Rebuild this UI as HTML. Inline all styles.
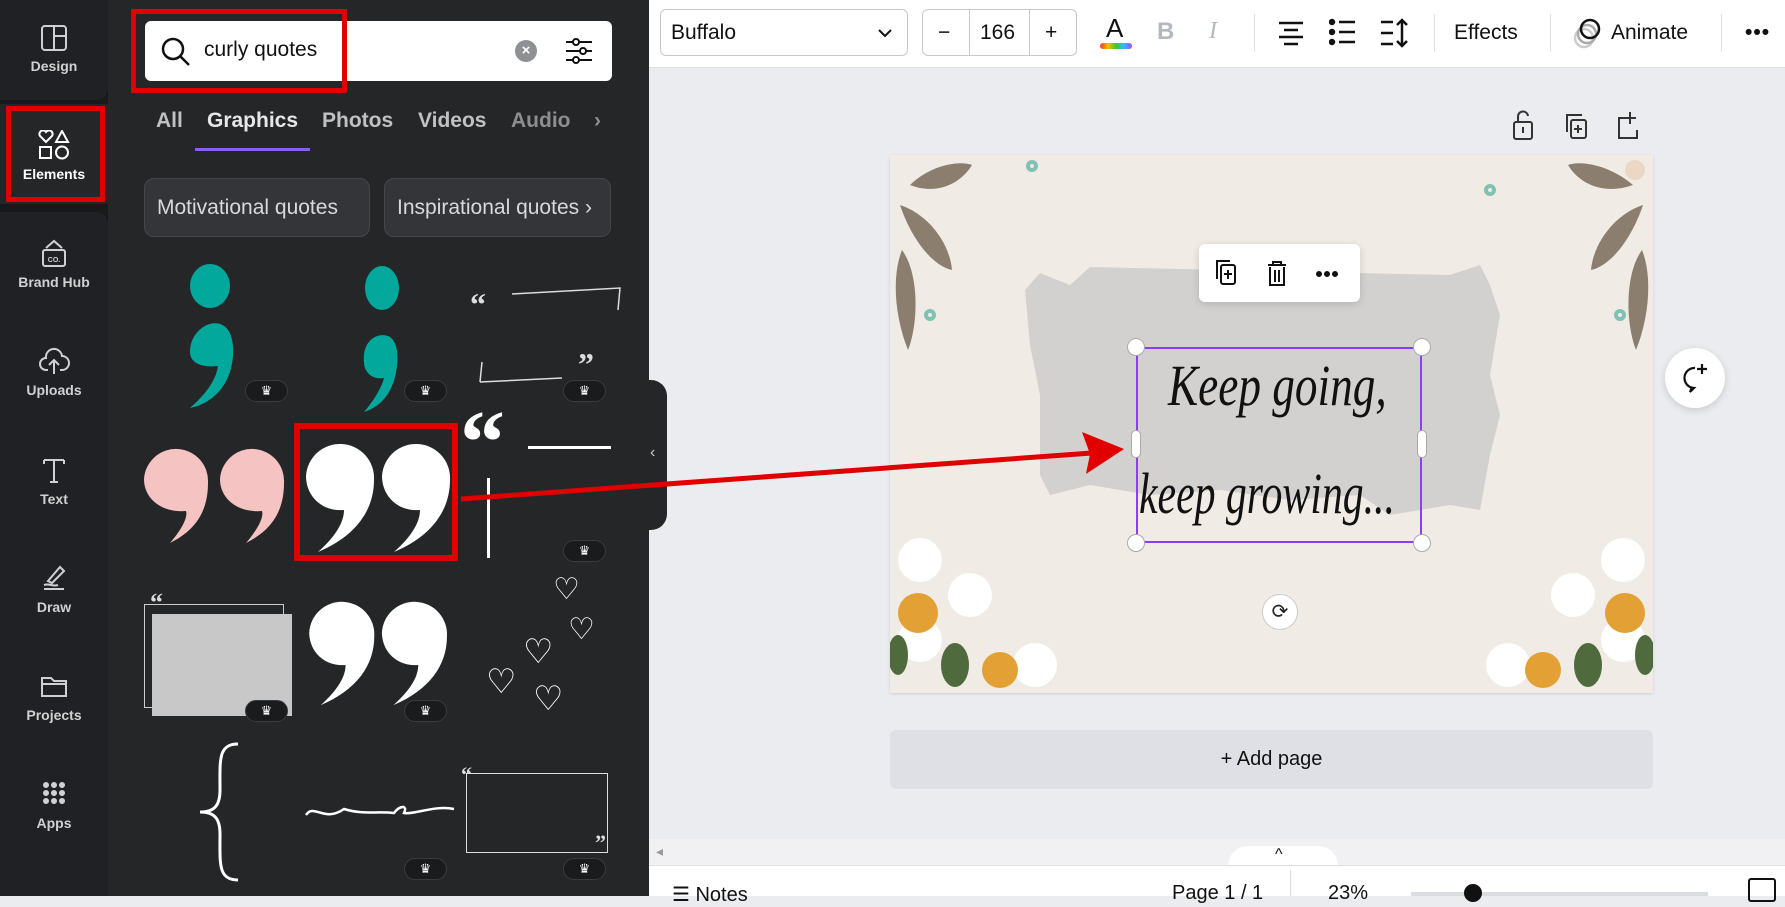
<!DOCTYPE html>
<html><head><meta charset="utf-8"><style>
*{box-sizing:border-box;margin:0;padding:0}
body{width:1785px;height:896px;overflow:hidden;background:#ebecf0;font-family:"Liberation Sans",sans-serif;position:relative}
.a{position:absolute}
.side{left:0;top:0;width:108px;height:896px;background:#18191b}
.si{position:absolute;left:0;width:108px;text-align:center;color:#d0d1d3;font-size:14px;font-weight:bold}
.si svg{display:block;margin:0 auto 6px}
.panel{left:108px;top:0;width:541px;height:896px;background:#252627}
.tab{position:absolute;top:109px;font-size:21px;font-weight:bold;color:#bfc1c4}
.chip{position:absolute;top:178px;height:59px;border-radius:10px;background:#343538;border:1px solid #45464a;color:#d8d9db;font-size:21px;line-height:57px;padding-left:12px;overflow:hidden;white-space:nowrap}
.crown{position:absolute;width:43px;height:22px;border-radius:11px;background:#1a1b1d;border:1px solid #3a3b3e;color:#fff;font-size:13px;text-align:center;line-height:20px}
.tb{left:649px;top:0;width:1136px;height:68px;background:#fff;border-bottom:1px solid #dcdde0}
.ti{position:absolute;top:21px;font-size:21px;color:#111}
.div{position:absolute;top:14px;width:1px;height:38px;background:#e0e1e3}
</style></head><body>

<div class="a side">
 <div class="a" style="left:0;top:0;width:108px;height:100px;background:#202124;border-radius:0 0 12px 0"></div>
 <div class="si" style="top:24px"><svg width="28" height="28" viewBox="0 0 28 28" fill="none" stroke="#cfd0d2" stroke-width="2"><rect x="2" y="2" width="24" height="24" rx="3"/><path d="M14 2v24M14 12h12"/></svg>Design</div>
 <div class="a" style="left:0;top:104px;width:108px;height:100px;background:#252627"></div>
 <div class="si" style="top:130px;color:#fff"><svg width="32" height="30" viewBox="0 0 32 30" fill="none" stroke="#fff" stroke-width="2"><path d="M8 12 L2 6 A3.5 3.5 0 0 1 8 2 A3.5 3.5 0 0 1 14 6Z"/><path d="M24 1 L30 12 H18Z"/><rect x="2" y="17" width="11" height="11"/><circle cx="24" cy="22.5" r="6"/></svg>Elements</div>
 <div class="a" style="left:6px;top:106px;width:99px;height:96px;border:5px solid #e00000"></div>
 <div class="a" style="left:0;top:212px;width:108px;height:684px;background:#202124;border-radius:0 12px 0 0"></div>
 <div class="si" style="top:238px"><svg width="28" height="30" viewBox="0 0 28 30" fill="none" stroke="#cfd0d2" stroke-width="2"><rect x="3" y="12" width="22" height="16" rx="2"/><path d="M6 10 L14 3 L22 10"/><text x="14" y="24" font-size="7" fill="#cfd0d2" stroke="none" text-anchor="middle">CO.</text></svg>Brand Hub</div>
 <div class="si" style="top:346px"><svg width="32" height="30" viewBox="0 0 32 30" fill="none" stroke="#cfd0d2" stroke-width="2"><path d="M10 24 H8 A6 6 0 0 1 8 12 A8 8 0 0 1 24 10 A6 6 0 0 1 24 24 H22"/><path d="M16 28 V15 M11 19 L16 14 L21 19"/></svg>Uploads</div>
 <div class="si" style="top:455px"><svg width="28" height="30" viewBox="0 0 28 30" fill="none" stroke="#cfd0d2" stroke-width="2"><path d="M4 5 H24 M14 5 V27 M4 5 V9 M24 5 V9 M10 27 H18"/></svg>Text</div>
 <div class="si" style="top:563px"><svg width="28" height="30" viewBox="0 0 28 30" fill="none" stroke="#cfd0d2" stroke-width="2"><path d="M8 18 L20 4 L24 8 L12 20Z M4 26 H24 M4 22 C10 20 12 24 18 22"/></svg>Draw</div>
 <div class="si" style="top:671px"><svg width="30" height="30" viewBox="0 0 30 30" fill="none" stroke="#cfd0d2" stroke-width="2"><path d="M3 7 H12 L15 10 H27 V25 H3Z M3 13 H27"/></svg>Projects</div>
 <div class="si" style="top:779px"><svg width="28" height="30" viewBox="0 0 28 30" fill="#cfd0d2"><circle cx="6" cy="6" r="3"/><circle cx="14" cy="6" r="3"/><circle cx="22" cy="6" r="3"/><circle cx="6" cy="14" r="3"/><circle cx="14" cy="14" r="3"/><circle cx="22" cy="14" r="3"/><circle cx="6" cy="22" r="3"/><circle cx="14" cy="22" r="3"/><circle cx="22" cy="22" r="3"/></svg>Apps</div>
</div>

<div class="a panel">
 <div class="a" style="left:37px;top:21px;width:467px;height:60px;background:#fff;border-radius:6px"></div>
 <svg class="a" style="left:52px;top:36px" width="32" height="32" viewBox="0 0 32 32" fill="none" stroke="#111" stroke-width="2.5"><circle cx="13" cy="13" r="10"/><path d="M20 20 L29 29"/></svg>
 <div class="a" style="left:96px;top:38px;font-size:21px;color:#111">curly quotes</div>
 <div class="a" style="left:407px;top:40px;width:22px;height:22px;border-radius:50%;background:#8e9093;color:#fff;font-size:15px;text-align:center;line-height:22px;font-weight:bold">×</div>
 <svg class="a" style="left:456px;top:37px" width="30" height="28" viewBox="0 0 30 28" fill="none" stroke="#111" stroke-width="2"><path d="M2 5H28M2 14H28M2 23H28"/><circle cx="12" cy="5" r="3" fill="#fff"/><circle cx="19" cy="14" r="3" fill="#fff"/><circle cx="12" cy="23" r="3" fill="#fff"/></svg>
 <div class="a" style="left:23px;top:9px;width:216px;height:84px;border:5px solid #e00000"></div>
 <div class="tab" style="left:48px">All</div>
 <div class="tab" style="left:99px;color:#e6e7e9">Graphics</div>
 <div class="tab" style="left:214px">Photos</div>
 <div class="tab" style="left:310px">Videos</div>
 <div class="tab" style="left:403px;color:#8c8e91">Audio</div>
 <div class="tab" style="left:486px;color:#8c8e91">›</div>
 <div class="a" style="left:87px;top:148px;width:115px;height:3px;background:#8b5cf6"></div>
 <div class="chip" style="left:36px;width:226px">Motivational quotes</div>
 <div class="chip" style="left:276px;width:227px">Inspirational quotes ›</div>

 <svg class="a" style="left:80px;top:262px" width="60" height="150" viewBox="0 0 60 150"><ellipse cx="22" cy="24" rx="20" ry="22" fill="#02a89c"/><path d="M2 90 C2 70 20 58 32 62 C46 66 48 90 42 110 C36 128 22 142 2 146 C18 132 28 118 30 104 C12 106 2 100 2 90Z" fill="#02a89c"/></svg>
 <div class="crown" style="left:137px;top:380px">♛</div>
 <svg class="a" style="left:246px;top:262px" width="60" height="150" viewBox="0 0 60 150"><ellipse cx="28" cy="26" rx="17" ry="22" fill="#02a89c"/><path d="M10 100 C8 80 22 70 34 74 C48 80 44 110 38 124 C32 138 22 146 10 150 C22 136 28 124 30 116 C18 118 10 110 10 100Z" fill="#02a89c"/></svg>
 <div class="crown" style="left:296px;top:380px">♛</div>
 <div class="a" style="left:362px;top:286px;color:#ddd;font-size:32px;font-weight:bold;font-family:'Liberation Serif',serif">“</div>
 <svg class="a" style="left:354px;top:280px" width="260" height="110" viewBox="0 0 260 110" fill="none" stroke="#ddd" stroke-width="1.5"><path d="M50 14 L158 8 L156 30 M18 102 L20 82 M18 102 L100 98"/></svg>
 <div class="a" style="left:470px;top:346px;color:#ddd;font-size:32px;font-weight:bold;font-family:'Liberation Serif',serif">”</div>
 <div class="crown" style="left:455px;top:380px">♛</div>

 <svg class="a" style="left:34px;top:445px" width="152" height="100" viewBox="0 0 152 100" fill="#f6c3c3"><path d="M2 34 A32 32 0 1 1 66 38 C66 68 52 86 28 98 C40 84 46 72 44 66 C20 68 2 54 2 34Z"/><path d="M78 34 A32 32 0 1 1 142 38 C142 68 128 86 104 98 C116 84 122 72 120 66 C96 68 78 54 78 34Z"/></svg>
 <svg class="a" style="left:196px;top:440px" width="152" height="115" viewBox="0 0 152 115" fill="#fff"><path d="M2 36 A34 34 0 1 1 70 40 C70 70 52 96 14 112 C32 96 40 82 40 70 C18 72 2 56 2 36Z"/><path d="M78 36 A34 34 0 1 1 146 40 C146 70 128 96 90 112 C108 96 116 82 116 70 C94 72 78 56 78 36Z"/></svg>
 <div class="a" style="left:186px;top:423px;width:164px;height:138px;border:6px solid #e00000"></div>
 <div class="a" style="left:352px;top:398px;color:#fff;font-size:90px;font-weight:bold;font-family:'Liberation Serif',serif;line-height:1">“</div>
 <div class="a" style="left:420px;top:446px;width:83px;height:3px;background:#fff"></div>
 <div class="a" style="left:379px;top:478px;width:3px;height:80px;background:#fff"></div>
 <div class="crown" style="left:455px;top:540px">♛</div>

 <div class="a" style="left:36px;top:604px;width:140px;height:104px;border:1px solid #ccc"></div>
 <div class="a" style="left:44px;top:614px;width:140px;height:102px;background:#c8c8c8"></div>
 <div class="a" style="left:42px;top:588px;color:#ddd;font-size:26px;font-weight:bold;font-family:'Liberation Serif',serif">“</div>
 <div class="crown" style="left:137px;top:700px">♛</div>
 <svg class="a" style="left:196px;top:598px" width="152" height="110" viewBox="0 0 152 115" fill="#fff"><path d="M2 36 A34 34 0 1 1 70 40 C70 70 52 96 14 112 C32 96 40 82 40 70 C18 72 2 56 2 36Z"/><path d="M78 36 A34 34 0 1 1 146 40 C146 70 128 96 90 112 C108 96 116 82 116 70 C94 72 78 56 78 36Z"/></svg>
 <div class="crown" style="left:296px;top:700px">♛</div>
 <div class="a" style="left:445px;top:575px;color:#fff;font-size:30px;line-height:1">♡</div>
 <div class="a" style="left:460px;top:615px;color:#fff;font-size:30px;line-height:1">♡</div>
 <div class="a" style="left:415px;top:635px;color:#fff;font-size:34px;line-height:1">♡</div>
 <div class="a" style="left:378px;top:665px;color:#fff;font-size:34px;line-height:1">♡</div>
 <div class="a" style="left:425px;top:682px;color:#fff;font-size:34px;line-height:1">♡</div>

 <svg class="a" style="left:80px;top:740px" width="60" height="145" viewBox="0 0 60 145" fill="none" stroke="#fff" stroke-width="3"><path d="M50 4 C30 4 32 20 32 50 C32 66 26 72 12 72 C26 72 32 78 32 94 C32 124 30 140 50 140"/></svg>
 <svg class="a" style="left:196px;top:795px" width="152" height="30" viewBox="0 0 152 30" fill="none" stroke="#fff" stroke-width="2.5"><path d="M2 20 C10 8 20 28 40 14 C60 20 70 16 90 18 C96 10 104 10 100 18 C110 20 130 10 150 14"/></svg>
 <div class="crown" style="left:296px;top:858px">♛</div>
 <div class="a" style="left:358px;top:773px;width:142px;height:80px;border:1px solid #ddd"></div>
 <div class="a" style="left:353px;top:762px;color:#ddd;font-size:22px;font-weight:bold;font-family:'Liberation Serif',serif">“</div>
 <div class="a" style="left:487px;top:830px;color:#ddd;font-size:22px;font-weight:bold;font-family:'Liberation Serif',serif">”</div>
 <div class="crown" style="left:455px;top:858px">♛</div>
</div>
<div class="a" style="left:645px;top:380px;width:22px;height:150px;background:#252627;border-radius:0 16px 16px 0"></div>
<div class="a" style="left:650px;top:444px;color:#ccc;font-size:16px">‹</div>

<div class="a tb">
 <div class="a" style="left:11px;top:9px;width:248px;height:47px;border:1px solid #c8c9cc;border-radius:6px"></div>
 <div class="ti" style="left:22px">Buffalo</div>
 <svg class="a" style="left:228px;top:27px" width="16" height="12" viewBox="0 0 16 12" fill="none" stroke="#111" stroke-width="2"><path d="M2 3 L8 9 L14 3"/></svg>
 <div class="a" style="left:273px;top:9px;width:155px;height:47px;border:1px solid #c8c9cc;border-radius:6px"></div>
 <div class="a" style="left:320px;top:10px;width:1px;height:45px;background:#c8c9cc"></div>
 <div class="a" style="left:380px;top:10px;width:1px;height:45px;background:#c8c9cc"></div>
 <div class="ti" style="left:289px">−</div>
 <div class="ti" style="left:331px">166</div>
 <div class="ti" style="left:396px">+</div>
 <div class="ti" style="left:457px;top:13px;font-size:26px">A</div>
 <div class="a" style="left:451px;top:43px;width:32px;height:6px;border-radius:3px;background:linear-gradient(90deg,#f33,#fb0,#3c3,#3bf,#a4f)"></div>
 <div class="ti" style="left:508px;top:18px;font-weight:bold;font-size:24px;color:#b5b8bd">B</div>
 <div class="ti" style="left:560px;top:18px;font-style:italic;font-size:24px;color:#b5b8bd;font-family:'Liberation Serif',serif">I</div>
 <div class="div" style="left:605px"></div>
 <svg class="a" style="left:628px;top:20px" width="28" height="26" viewBox="0 0 28 26" stroke="#111" stroke-width="2.5"><path d="M2 3H26M7 10H21M2 17H26M7 24H21"/></svg>
 <svg class="a" style="left:680px;top:18px" width="28" height="28" viewBox="0 0 28 28" fill="#111" stroke="#111" stroke-width="2.5"><circle cx="3" cy="4" r="2"/><circle cx="3" cy="14" r="2"/><circle cx="3" cy="24" r="2"/><path d="M10 4H26M10 14H26M10 24H26"/></svg>
 <svg class="a" style="left:730px;top:17px" width="30" height="32" viewBox="0 0 30 32" fill="none" stroke="#111" stroke-width="2.5"><path d="M2 5H14M2 16H14M2 27H14M23 3V29M18 8L23 3L28 8M18 24L23 29L28 24"/></svg>
 <div class="div" style="left:785px"></div>
 <div class="ti" style="left:805px">Effects</div>
 <div class="div" style="left:901px"></div>
 <svg class="a" style="left:923px;top:16px" width="32" height="34" viewBox="0 0 32 34" fill="none" stroke-width="2.5"><circle cx="12" cy="22" r="9" stroke="#ccc"/><circle cx="15" cy="18" r="9" stroke="#aaa"/><circle cx="18" cy="13" r="9" stroke="#111"/></svg>
 <div class="ti" style="left:962px">Animate</div>
 <div class="div" style="left:1072px"></div>
 <div class="ti" style="left:1096px;font-weight:bold;letter-spacing:1px">•••</div>
</div>

<svg class="a" style="left:1512px;top:110px" width="150" height="32" viewBox="0 0 150 32" fill="none" stroke="#333" stroke-width="2"><rect x="2" y="12" width="18" height="17" rx="2"/><path d="M6 12 V7 A5 5 0 0 1 16 6 M11 17V23"/><rect x="59" y="10" width="15" height="18" rx="2"/><path d="M55 22 V5 H70 M66 15V23M62 19H70"/><path d="M113 8 H107 V28 H125 V20 M118 2V14M112 8H124"/></svg>

<div class="a" style="left:890px;top:155px;width:763px;height:538px;background:#f0ebe4;overflow:hidden;box-shadow:0 1px 3px rgba(0,0,0,.12)">
 <svg class="a" style="left:0;top:0" width="763" height="538" viewBox="0 0 763 538">
  <g fill="#8b7e6e"><path d="M20 30 C40 10 70 5 82 10 C70 30 45 40 20 30Z"/><path d="M10 50 C40 60 60 90 62 115 C40 110 20 80 10 50Z"/><path d="M12 95 C30 120 28 170 18 195 C4 160 2 120 12 95Z"/>
  <path d="M743 30 C720 10 690 5 678 10 C690 30 715 40 743 30Z"/><path d="M753 50 C723 60 703 90 701 115 C723 110 743 80 753 50Z"/><path d="M752 95 C734 120 736 170 746 195 C760 160 762 120 752 95Z"/></g>
  <g fill="none" stroke="#7fc1b4" stroke-width="4"><circle cx="142" cy="11" r="4"/><circle cx="40" cy="160" r="4"/><circle cx="600" cy="35" r="4"/><circle cx="730" cy="160" r="4"/></g>
  <circle cx="745" cy="15" r="10" fill="#ecd6c4"/>
  <path d="M135 135 L150 118 L180 130 L200 112 L560 120 L590 110 L600 130 L610 160 L600 220 L610 260 L600 300 L590 355 L560 350 L500 360 L470 340 L400 345 L330 335 L260 340 L200 330 L160 340 L150 320 L150 240 L140 190 Z" fill="#d3d1cf"/>
  <g><circle cx="30" cy="405" r="22" fill="#fff"/><circle cx="30" cy="485" r="22" fill="#fff"/><circle cx="80" cy="440" r="22" fill="#fff"/><circle cx="145" cy="510" r="22" fill="#fff"/><circle cx="28" cy="458" r="20" fill="#e2a035"/><circle cx="110" cy="515" r="18" fill="#e2a035"/><ellipse cx="65" cy="510" rx="14" ry="22" fill="#4f6a3c"/><ellipse cx="8" cy="500" rx="10" ry="20" fill="#4f6a3c"/>
  <circle cx="733" cy="405" r="22" fill="#fff"/><circle cx="733" cy="485" r="22" fill="#fff"/><circle cx="683" cy="440" r="22" fill="#fff"/><circle cx="618" cy="510" r="22" fill="#fff"/><circle cx="735" cy="458" r="20" fill="#e2a035"/><circle cx="653" cy="515" r="18" fill="#e2a035"/><ellipse cx="698" cy="510" rx="14" ry="22" fill="#4f6a3c"/><ellipse cx="755" cy="500" rx="10" ry="20" fill="#4f6a3c"/></g>
 </svg>
</div>

<div class="a" style="left:1199px;top:244px;width:161px;height:58px;background:#fff;border-radius:6px;box-shadow:0 2px 8px rgba(0,0,0,.15)"></div>
<svg class="a" style="left:1214px;top:258px" width="130" height="30" viewBox="0 0 130 30" fill="none" stroke="#111" stroke-width="2"><rect x="7" y="7" width="14" height="19" rx="2"/><path d="M3 21 V3 H16 M14 12V21M10 16H18"/><path d="M54 7H72M59 7V4H67V7M56 9V27H70V9M61 12V24M65 12V24"/><circle cx="105" cy="16" r="2" fill="#111"/><circle cx="113" cy="16" r="2" fill="#111"/><circle cx="121" cy="16" r="2" fill="#111"/></svg>

<div class="a" style="left:1136px;top:347px;width:286px;height:196px;border:2.5px solid #8b3dff"></div>
<div class="a" style="left:1168px;top:352px;font-family:'Liberation Serif',serif;font-style:italic;font-size:58px;color:#111;transform:scaleX(.78);transform-origin:left;white-space:nowrap">Keep going,</div>
<div class="a" style="left:1139px;top:460px;font-family:'Liberation Serif',serif;font-style:italic;font-size:58px;color:#111;transform:scaleX(.72);transform-origin:left;white-space:nowrap">keep growing...</div>
<div class="a" style="left:1127px;top:338px;width:18px;height:18px;border-radius:50%;background:#fff;border:1px solid #aaa"></div>
<div class="a" style="left:1413px;top:338px;width:18px;height:18px;border-radius:50%;background:#fff;border:1px solid #aaa"></div>
<div class="a" style="left:1127px;top:534px;width:18px;height:18px;border-radius:50%;background:#fff;border:1px solid #aaa"></div>
<div class="a" style="left:1413px;top:534px;width:18px;height:18px;border-radius:50%;background:#fff;border:1px solid #aaa"></div>
<div class="a" style="left:1131px;top:430px;width:10px;height:28px;border-radius:5px;background:#fff;border:1px solid #aaa"></div>
<div class="a" style="left:1417px;top:430px;width:10px;height:28px;border-radius:5px;background:#fff;border:1px solid #aaa"></div>
<div class="a" style="left:1262px;top:594px;width:36px;height:36px;border-radius:50%;background:#fff;border:1px solid #ccc;text-align:center;line-height:34px;font-size:20px;color:#222">⟳</div>

<svg class="a" style="left:0;top:0" width="1785" height="896" viewBox="0 0 1785 896"><path d="M461 499 L1092 453" stroke="#e00000" stroke-width="5"/><path d="M1124 449 L1082 432 L1090 454 L1086 474 Z" fill="#e00000"/></svg>

<div class="a" style="left:1665px;top:348px;width:60px;height:60px;border-radius:50%;background:#fff;box-shadow:0 2px 8px rgba(0,0,0,.15)"></div>
<svg class="a" style="left:1680px;top:362px" width="30" height="32" viewBox="0 0 30 32" fill="none" stroke="#111" stroke-width="2.2"><path d="M15 6 A10 10 0 1 0 14 26 L10 30 L12 25"/><path d="M22 2V12M17 7H27"/></svg>

<div class="a" style="left:890px;top:730px;width:763px;height:59px;background:#dfe0e5;border-radius:6px;text-align:center;line-height:59px;font-size:20px;color:#111">+ Add page</div>

<div class="a" style="left:649px;top:839px;width:1136px;height:27px;background:#f1f1f3"></div>
<div class="a" style="left:656px;top:843px;color:#999;font-size:14px">◂</div>
<div class="a" style="left:1228px;top:846px;width:110px;height:24px;background:#fff;border-radius:20px 20px 0 0"></div>
<div class="a" style="left:1275px;top:846px;font-size:16px;color:#111">^</div>
<div class="a" style="left:649px;top:865px;width:1136px;height:31px;background:#fff;border-top:1px solid #e0e0e0"></div>
<div class="a" style="left:672px;top:882px;font-size:20px;color:#111">☰ Notes</div>
<div class="a" style="left:1172px;top:882px;font-size:20px;color:#111">Page 1 / 1</div>
<div class="a" style="left:1290px;top:870px;width:1px;height:26px;background:#ddd"></div>
<div class="a" style="left:1328px;top:882px;font-size:20px;color:#111">23%</div>
<div class="a" style="left:1411px;top:892px;width:297px;height:4px;background:#dcdde0"></div>
<div class="a" style="left:1464px;top:884px;width:18px;height:18px;border-radius:50%;background:#111"></div>
<div class="a" style="left:1748px;top:878px;width:28px;height:24px;border:2px solid #111;border-radius:3px"></div>
</body></html>
